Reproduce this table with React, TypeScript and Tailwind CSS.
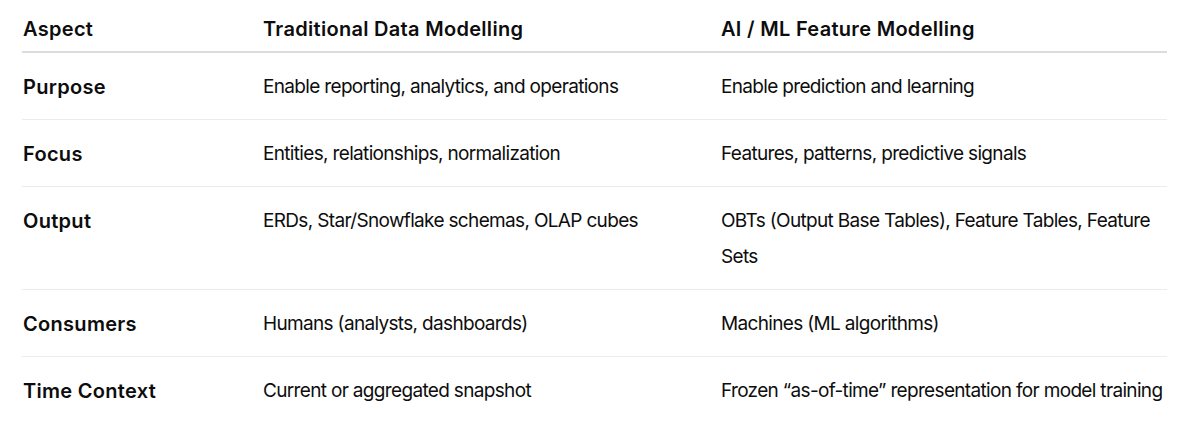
const ROWS = [
  {
    aspect: "Purpose",
    traditional: "Enable reporting, analytics, and operations",
    ml: "Enable prediction and learning",
  },
  {
    aspect: "Focus",
    traditional: "Entities, relationships, normalization",
    ml: "Features, patterns, predictive signals",
  },
  {
    aspect: "Output",
    traditional: "ERDs, Star/Snowflake schemas, OLAP cubes",
    ml: "OBTs (Output Base Tables), Feature Tables, Feature Sets",
  },
  {
    aspect: "Consumers",
    traditional: "Humans (analysts, dashboards)",
    ml: "Machines (ML algorithms)",
  },
  {
    aspect: "Time Context",
    traditional: "Current or aggregated snapshot",
    ml: "Frozen “as-of-time” representation for model training",
  },
];

export default function App() {
  return (
    <div className="min-h-screen bg-white px-[22px] pt-[11px] font-['Inter',sans-serif] text-[19px] leading-[36px] tracking-[-0.035em] text-[#0d0d0d] antialiased">
      <div className="w-[1145px]">
        <div className="grid grid-cols-[240px_458px_1fr] border-b-2 border-[#dcdcdc] pb-[4px] text-[20px] font-semibold tracking-[0.015em]">
          <div className="pl-px">Aspect</div>
          <div className="pl-px">Traditional Data Modelling</div>
          <div className="pl-px">AI / ML Feature Modelling</div>
        </div>

        {ROWS.map((row, index) => (
          <div
            key={row.aspect}
            className={
              index === ROWS.length - 1
                ? "grid grid-cols-[240px_458px_1fr] pt-[16px] pb-[14px]"
                : "grid grid-cols-[240px_458px_1fr] border-b border-[#ececec] pt-[16px] pb-[14px]"
            }
          >
            <div className="pl-px text-[20px] font-semibold tracking-[0.015em]">{row.aspect}</div>
            <div className="pl-px">{row.traditional}</div>
            <div className="pl-px pr-[2px]">{row.ml}</div>
          </div>
        ))}
      </div>
    </div>
  );
}
